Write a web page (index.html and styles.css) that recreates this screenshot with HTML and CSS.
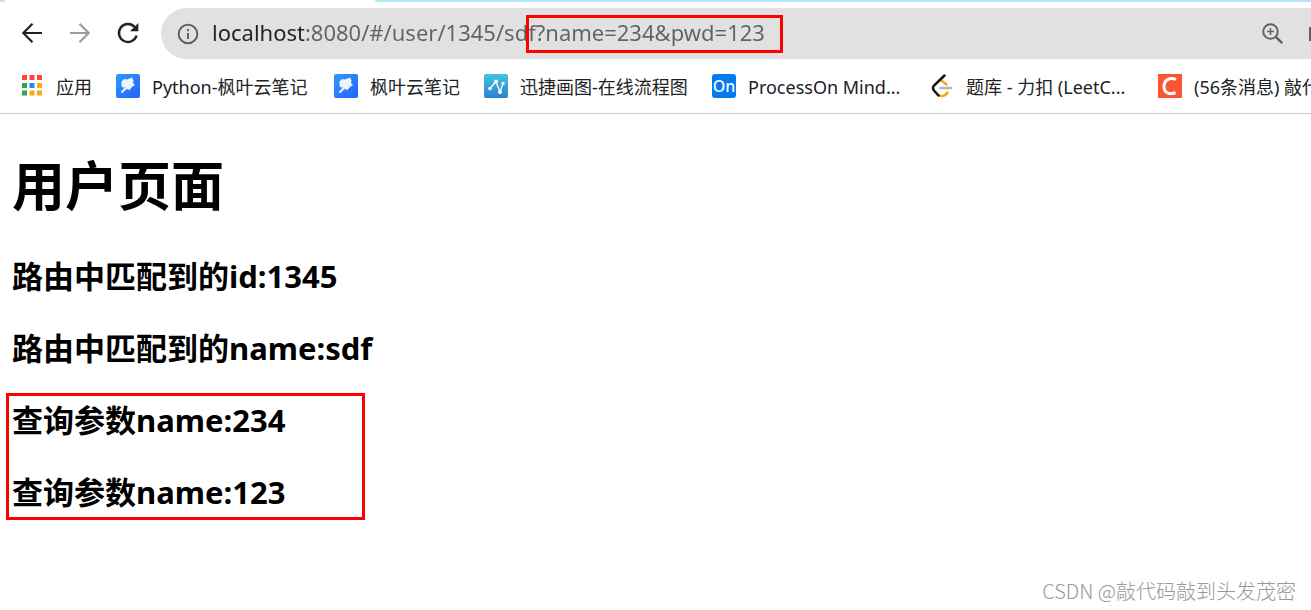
FILE: index.html
```
<!DOCTYPE html>
<html lang="zh-CN">
<head>
  <meta charset="UTF-8">
  <title>用户页面</title>
  <meta name="viewport" content="width=device-width, initial-scale=1.0">
  <link rel="stylesheet" href="styles.css">
</head>
<body>

<!-- Browser bar -->
<header class="browser">
  <div class="tab-strip">
    <span class="strip-left"></span>
    <span class="strip-right"></span>
  </div>

  <div class="toolbar">
    <button class="nav-button" aria-label="后退">
      <svg width="24" height="24" viewBox="0 0 24 24" fill="none" stroke="#202124" stroke-width="2.2"><path d="M22 11H3.5M12.5 1.8L3.3 11l9.2 9.2"/></svg>
    </button>
    <button class="nav-button" aria-label="前进">
      <svg width="24" height="24" viewBox="0 0 24 24" fill="none" stroke="#9c9c9c" stroke-width="2.2"><path d="M2 11h18.5M11.5 1.8l9.2 9.2-9.2 9.2"/></svg>
    </button>
    <button class="nav-button" aria-label="刷新">
      <svg width="24" height="24" viewBox="0 0 24 24" fill="none"><path d="M20.6 13.5A9 9 0 1 1 18.7 5" stroke="#202124" stroke-width="2.4"/><path d="M22.3 1v8.300H14z" fill="#202124"/></svg>
    </button>

    <div class="address-bar">
      <svg class="info-icon" width="24" height="24" viewBox="0 0 24 24" fill="none" stroke="#5f6368" stroke-width="2"><circle cx="12" cy="12" r="9.300"/><path d="M12 11v6M12 7v2.200"/></svg>
      <input class="url" type="text" aria-label="地址" value="localhost:8080/#/user/1345/sdf?name=234&amp;pwd=123">
      <button class="zoom-button" aria-label="缩放">
        <svg width="24" height="24" viewBox="0 0 24 24" fill="none" stroke="#5f6368"><circle cx="9.500" cy="9.500" r="7.300" stroke-width="2"/><path d="M9.500 6v7M6 9.500h7" stroke-width="1.500"/><path d="M14.800 14.800l6.400 6.400" stroke-width="2.600"/></svg>
      </button>
      <span class="cut-icon"></span>
      <span class="mark mark-query"></span>
    </div>
  </div>

  <nav class="bookmarks">
    <a class="bookmark" href="#">
      <svg width="24" height="24" viewBox="0 0 24 24"><path fill="#ff4336" d="M2 1h5v5H2zM9.500 1h5v5h-5zM17 1h5v5h-5z"/><path fill="#34a05a" d="M2 9h5v5H2zM2 16.500h5v5H2z"/><path fill="#1e88ff" d="M9.500 9h5v5h-5z"/><path fill="#fbaa0a" d="M17 9h5v5h-5zM9.500 16.500h5v5h-5zM17 16.500h5v5h-5z"/></svg>
      <span class="label">应用</span>
    </a>
    <a class="bookmark" href="#">
      <svg width="24" height="24" viewBox="0 0 24 24"><defs><linearGradient id="leaf" x2="1" y2="1"><stop stop-color="#2b9cff"/><stop offset="1" stop-color="#2860fb"/></linearGradient></defs><rect width="24" height="24" rx="2" fill="url(#leaf)"/><path fill="#eef4ff" d="M5.500 7.500L8 5l3 .5L16 3.500l1.500 3-.5 2.500 2 2-3 2-3 3.500-5-1.500L5.500 12z"/><path d="M12 11l-4 5-2.500 2.500" fill="none" stroke="#eef4ff" stroke-width="2"/><path d="M8.500 13l-2 2M10.500 15l3 1.500" stroke="#2e79f5"/></svg>
      <span class="label label-md">Python-枫叶云笔记</span>
    </a>
    <a class="bookmark" href="#">
      <svg width="24" height="24" viewBox="0 0 24 24"><rect width="24" height="24" rx="2" fill="url(#leaf)"/><path fill="#eef4ff" d="M5.500 7.500L8 5l3 .5L16 3.500l1.500 3-.5 2.500 2 2-3 2-3 3.500-5-1.500L5.500 12z"/><path d="M12 11l-4 5-2.500 2.500" fill="none" stroke="#eef4ff" stroke-width="2"/><path d="M8.500 13l-2 2M10.500 15l3 1.500" stroke="#2e79f5"/></svg>
      <span class="label">枫叶云笔记</span>
    </a>
    <a class="bookmark" href="#">
      <svg width="24" height="24" viewBox="0 0 24 24"><defs><linearGradient id="chart" x2="0" y2="1"><stop stop-color="#43c6df"/><stop offset="1" stop-color="#2d7fd0"/></linearGradient></defs><rect width="24" height="24" rx="2" fill="url(#chart)"/><path d="M6 14.500l6-7 4 10.500 3-8.500" fill="none" stroke="#fff" stroke-width="1.300"/><g fill="#fff"><circle cx="6" cy="14.500" r="1.800"/><circle cx="12" cy="7.500" r="2"/><circle cx="16" cy="18" r="2"/><circle cx="19" cy="9.500" r="1.700"/></g></svg>
      <span class="label label-lg">迅捷画图-在线流程图</span>
    </a>
    <a class="bookmark" href="#">
      <span class="on-icon">On</span>
      <span class="label label-md">ProcessOn Mind...</span>
    </a>
    <a class="bookmark" href="#">
      <svg width="24" height="24" viewBox="0 0 24 24" fill="none" stroke-linecap="round" stroke-width="2.500"><path stroke="#ffa116" d="M11.500 6.500l5 4M17.500 18.500c-2.500 4-6.500 4.300-9.500 2.500"/><path stroke="#b3b3b3" d="M10.500 14h10.500"/><path stroke="#111" d="M14.500 1.500L4 11.500q-2 2.500 0 5l4.500 5"/></svg>
      <span class="label label-lg">题库 - 力扣 (LeetC...</span>
    </a>
    <a class="bookmark" href="#">
      <svg width="24" height="24" viewBox="0 0 24 24"><path fill="#fc5531" d="M0 0h24v24H0z"/><path d="M18 5.500C11.500 2.500 6 6.500 6 12.500c0 6.500 5.500 8.500 11.500 6" fill="none" stroke="#fff" stroke-width="3"/></svg>
      <span class="label">(56条消息) 敲代</span>
    </a>
  </nav>
</header>

<!-- User page -->
<main class="page">
  <h1>用户页面</h1>
  <h3>路由中匹配到的id:1345</h3>
  <h3>路由中匹配到的name:sdf</h3>
  <div class="params">
    <h3>查询参数name:234</h3>
    <h3>查询参数name:123</h3>
    <span class="mark mark-params"></span>
  </div>
</main>

<div class="watermark">CSDN @敲代码敲到头发茂密</div>

</body>
</html>
```
FILE: styles.css
```
* {
  box-sizing: border-box;
}

body {
  margin: 0;
  background: #fff;
  color: #000;
  font-family: "Noto Sans", "Noto Sans CJK SC", sans-serif;
  overflow: hidden;
}

button {
  padding: 0;
  border: none;
  background: none;
}

svg {
  display: block;
  flex: none;
}

.browser {
  border-bottom: 1px solid #cacaca;
}

.tab-strip {
  display: flex;
  justify-content: space-between;
  gap: 370px;
  height: 2px;
}

.strip-left {
  width: 5px;
  background: #b4e7f3;
  border-bottom-right-radius: 4px;
}

.strip-right {
  flex: 1;
  background: #b4e7f3;
  border-bottom-left-radius: 4px;
}

.toolbar {
  display: flex;
  align-items: center;
  gap: 24px;
  padding: 6px 0 0 20px;
}

.address-bar {
  position: relative;
  display: flex;
  flex: 1;
  align-items: center;
  height: 51px;
  margin-left: -3px;
  padding-left: 15px;
  background: #e1e1e1;
  border-radius: 26px 0 0 26px;
}

/* host part is darker than the rest of the address */
.url {
  flex: 1;
  min-width: 0;
  height: 40px;
  margin-left: 12px;
  padding: 0 0 3px;
  border: none;
  outline: none;
  font: 22px "Noto Sans", sans-serif;
  color: transparent;
  background: linear-gradient(to right, #202124 92px, #5f6368 92px);
  background-clip: text;
  -webkit-background-clip: text;
}

.cut-icon {
  width: 2px;
  height: 14px;
  margin-left: 24px;
  background: #5f6368;
}

.mark {
  position: absolute;
  border: 3px solid #f00;
  pointer-events: none;
}

.mark-query {
  top: 7px;
  left: 365px;
  width: 257px;
  height: 38px;
}

.bookmarks {
  display: flex;
  align-items: center;
  gap: 24px;
  height: 54px;
  padding-left: 20px;
  overflow: hidden;
}

.bookmark {
  display: flex;
  flex: none;
  align-items: center;
  gap: 12px;
  color: #202124;
  font-size: 18px;
  line-height: 26px;
  text-decoration: none;
  white-space: nowrap;
}

.label {
  padding-top: 2px;
}

.label-md {
  min-width: 158px;
}

.label-lg {
  min-width: 168px;
}

.on-icon {
  width: 24px;
  height: 24px;
  border-radius: 3px;
  background: #067bef;
  color: #fff;
  font-size: 16px;
  font-weight: 500;
  line-height: 24px;
  text-align: center;
}

.page {
  padding: 36px 12px 0;
}

h1 {
  margin: 0 0 33px;
  font-size: 53px;
  line-height: 72px;
}

h3 {
  margin: 0 0 30px;
  font-size: 31px;
  line-height: 42px;
}

.params {
  position: relative;
}

.mark-params {
  top: -6px;
  left: -6px;
  width: 359px;
  height: 127px;
}

.watermark {
  position: absolute;
  right: 15px;
  bottom: 4px;
  color: #999;
  font-family: "Noto Sans CJK SC", sans-serif;
  font-size: 20px;
  font-weight: 300;
  line-height: 30px;
}
```
